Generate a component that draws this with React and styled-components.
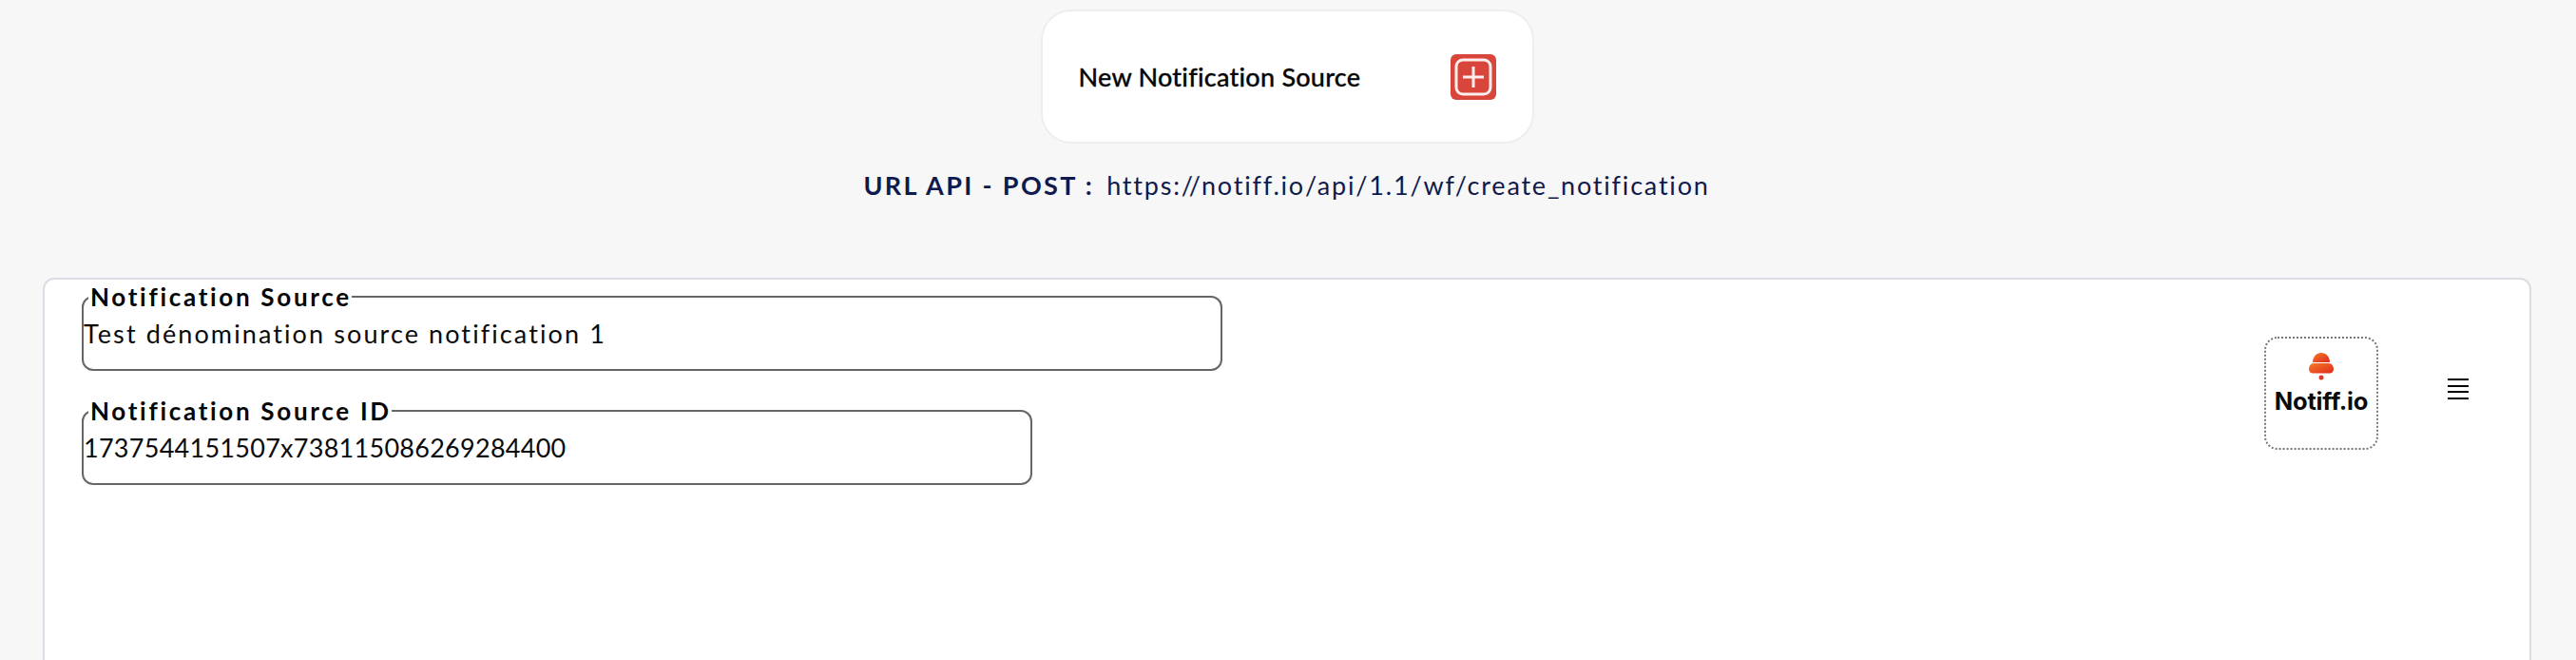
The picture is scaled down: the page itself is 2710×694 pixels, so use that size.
import React from 'react';
import styled, { createGlobalStyle } from 'styled-components';

const Global = createGlobalStyle`
  html, body {
    margin: 0;
    height: 100%;
    background-color: #f7f7f7;
    overflow: hidden;
  }
  body {
    font-family: Lato, 'Open Sans', sans-serif;
    color: #0a0a0a;
  }
`

const Page = styled.div`
  display: flex;
  flex-direction: column;
  align-items: center;
  padding-top: 10px;
  height: 694px;
  box-sizing: border-box;
`

const NewButton = styled.div`
  display: flex;
  align-items: center;
  justify-content: space-between;
  width: 519px;
  height: 141px;
  box-sizing: border-box;
  margin-right: 2px;
  padding: 0 38px 0 38px;
  background-color: #fff;
  border: 2px solid #eeeeee;
  border-radius: 32px;
`

const ButtonLabel = styled.span`
  font-size: 27px;
  font-weight: 500;
  letter-spacing: 0.25px;
  -webkit-text-stroke: 0.3px #050505;
  color: #050505;
`

const UrlRow = styled.div`
  display: flex;
  gap: 13px;
  margin-top: 27px;
  margin-right: 3px;
  line-height: 34px;
  font-size: 27px;
  color: #0f1a4d;
`

const UrlLabel = styled.span`
  font-weight: 700;
  letter-spacing: 2.35px;
`

const UrlValue = styled.span`
  font-weight: 400;
  letter-spacing: 1.8px;
`

const Panel = styled.div`
  display: flex;
  justify-content: space-between;
  align-self: stretch;
  flex: 1;
  margin: 80px 47px 0 45px;
  padding: 2px 64px 0 39px;
  background-color: #fff;
  border: 2px solid #dcdce4;
  border-bottom: none;
  border-radius: 12px 12px 0 0;
`

const Fields = styled.div`
  display: flex;
  flex-direction: column;
  gap: 26px;
`

const Field = styled.fieldset`
  width: ${props => props.width}px;
  height: 94px;
  box-sizing: border-box;
  margin: 0;
  padding: 5px 0 0 0;
  border: 2px solid #666666;
  border-radius: 12px;
`

const FieldTitle = styled.legend`
  padding: 0 0 0 2px;
  margin-left: 5px;
  font-size: 26px;
  line-height: 32px;
  font-weight: 700;
  letter-spacing: 2.7px;
  color: #050505;
`

const FieldValue = styled.div`
  font-size: 27px;
  line-height: 36px;
  font-weight: 400;
  letter-spacing: ${props => props.numeric ? "0.27px" : "2.1px"};
  color: #0a0a0a;
`

const Side = styled.div`
  display: flex;
  align-items: flex-start;
  gap: 73px;
  padding-top: 58px;
`

const Logo = styled.div`
  display: flex;
  flex-direction: column;
  align-items: center;
  width: 120px;
  height: 119px;
  box-sizing: border-box;
  padding-top: 15px;
  border: 2px dotted #777777;
  border-radius: 14px;
`

const LogoName = styled.span`
  margin-top: 7px;
  font-family: Inter, sans-serif;
  font-size: 25.5px;
  line-height: 30px;
  font-weight: 700;
  letter-spacing: -0.2px;
  color: #0a0a0a;
`

const Burger = styled.div`
  display: flex;
  flex-direction: column;
  gap: 4.5px;
  width: 22px;
  margin-top: 44px;
`

const BurgerLine = styled.span`
  height: 2px;
  background-color: #000;
`

const PlusIcon = () => (
  <svg width="48" height="48" viewBox="0 0 48 48" aria-hidden="true">
    <rect width="48" height="48" rx="6" fill="#d8453a" />
    <rect x="6" y="6" width="36" height="36" rx="7" fill="none" stroke="#fbeeec" strokeWidth="3" />
    <path d="M24 13v22M13 24h22" stroke="#fbeeec" strokeWidth="3" fill="none" />
  </svg>
);

const BellIcon = () => (
  <svg width="26" height="29" viewBox="0 0 26 29" aria-hidden="true">
    <defs>
      <linearGradient id="bell" x1="0" y1="0" x2="1" y2="1">
        <stop offset="0" stopColor="#f47a2a" />
        <stop offset="1" stopColor="#e02a1c" />
      </linearGradient>
    </defs>
    <path d="M4 10C4 4 8 0 13 0s9 4 9 10z" fill="url(#bell)" />
    <path d="M5 11h16c3 0 5 3 5 6 0 3-2 4.500-4 4.500H4c-2 0-4-1.500-4-4.500 0-3 2-6 5-6z" fill="url(#bell)" />
    <circle cx="13" cy="26" r="2.500" fill="#e4352a" />
  </svg>
);

const App = () => {
  return (
    <Page>
      <Global />
      <NewButton>
        <ButtonLabel>New Notification Source</ButtonLabel>
        <PlusIcon />
      </NewButton>
      <UrlRow>
        <UrlLabel>URL API - POST :</UrlLabel>
        <UrlValue>https://notiff.io/api/1.1/wf/create_notification</UrlValue>
      </UrlRow>
      <Panel>
        <Fields>
          <Field width={1200}>
            <FieldTitle>Notification Source</FieldTitle>
            <FieldValue>Test dénomination source notification 1</FieldValue>
          </Field>
          <Field width={1000}>
            <FieldTitle>Notification Source ID</FieldTitle>
            <FieldValue numeric>1737544151507x738115086269284400</FieldValue>
          </Field>
        </Fields>
        <Side>
          <Logo>
            <BellIcon />
            <LogoName>Notiff.io</LogoName>
          </Logo>
          <Burger>
            <BurgerLine />
            <BurgerLine />
            <BurgerLine />
            <BurgerLine />
          </Burger>
        </Side>
      </Panel>
    </Page>
  );
};

export default App;
